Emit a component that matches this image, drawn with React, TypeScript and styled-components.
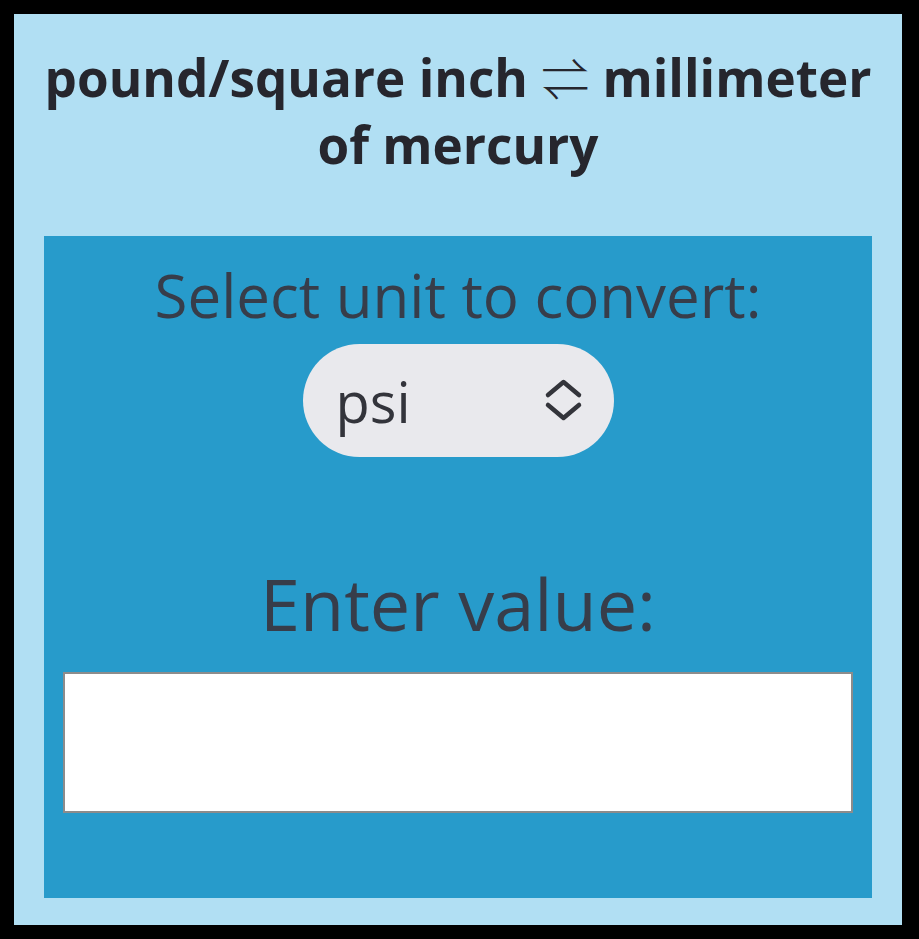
import * as React from 'react';
import styled, { createGlobalStyle } from 'styled-components';

const GlobalStyle = createGlobalStyle`
    html, body {
        margin: 0;
        padding: 0;
        background: #000;
    }
    body {
        font-family: "Open Sans", "Noto Sans", sans-serif;
    }
`;

const Frame = styled('div')`
    width: 919px;
    height: 939px;
    box-sizing: border-box;
    padding: 14px 17px 14px 14px;
    background: #000;
`;

const Converter = styled('div')`
    height: 100%;
    background-color: #b1dff3;
    display: flex;
    flex-direction: column;
    padding: 0 30px 27px 30px;
    box-sizing: border-box;
`;

const Title = styled('h1')`
    margin: 0 -6px;
    height: 222px;
    box-sizing: border-box;
    padding-top: 30px;
    font-size: 51.2px;
    font-weight: 700;
    line-height: 67px;
    text-align: center;
    color: #26262d;
`;

const Arrows = styled('span')`
    font-family: "Noto Sans CJK JP", "DejaVu Sans", sans-serif;
    font-weight: 300;
    font-size: 48px;
    line-height: 0;
`;

const Panel = styled('div')`
    flex: 1;
    background-color: #279bcb;
    display: flex;
    flex-direction: column;
    align-items: center;
    padding: 20px 19px 0 19px;
`;

const Label = styled('div')<{ $size: number; $gap: number }>`
    margin-top: ${p => p.$gap}px;
    font-size: ${p => p.$size}px;
    color: #373d4a;
    line-height: 1.3;
    white-space: nowrap;
`;

const SelectWrap = styled('div')`
    position: relative;
    margin-top: 10px;
    width: 311px;
    height: 113px;
`;

const UnitSelect = styled('select')`
    appearance: none;
    width: 100%;
    height: 100%;
    border: none;
    border-radius: 57px;
    background: #e9e9ed;
    color: #33343b;
    font-family: "Open Sans", sans-serif;
    font-size: 56px;
    padding: 0 0 0 33px;
    outline: none;
`;

const Chevrons = styled('svg')`
    position: absolute;
    right: 30px;
    top: 34px;
    pointer-events: none;
`;

const ValueInput = styled('input')`
    width: 100%;
    height: 141px;
    box-sizing: border-box;
    margin-top: 21px;
    border: 2px solid #8c8c8c;
    background: #fff;
    font-size: 40px;
`;

export default function App() {
    return (
        <>
            <GlobalStyle />
            <Frame>
                <Converter>
                    <Title>
                        pound/square inch <Arrows>⇌</Arrows> millimeter of mercury
                    </Title>
                    <Panel>
                        <Label $size={60} $gap={0}>Select unit to convert:</Label>
                        <SelectWrap>
                            <UnitSelect defaultValue="psi">
                                <option value="psi">psi</option>
                                <option value="mmHg">mmHg</option>
                            </UnitSelect>
                            <Chevrons width="41" height="44" viewBox="0 0 41 44" fill="none" stroke="#33343b" strokeWidth="4.5" strokeLinecap="round" strokeLinejoin="round">
                                <path d="M5 17 L20.5 4 L36 17" />
                                <path d="M5 27 L20.5 40 L36 27" />
                            </Chevrons>
                        </SelectWrap>
                        <Label $size={72} $gap={100}>Enter value:</Label>
                        <ValueInput type="text" />
                    </Panel>
                </Converter>
            </Frame>
        </>
    );
}
